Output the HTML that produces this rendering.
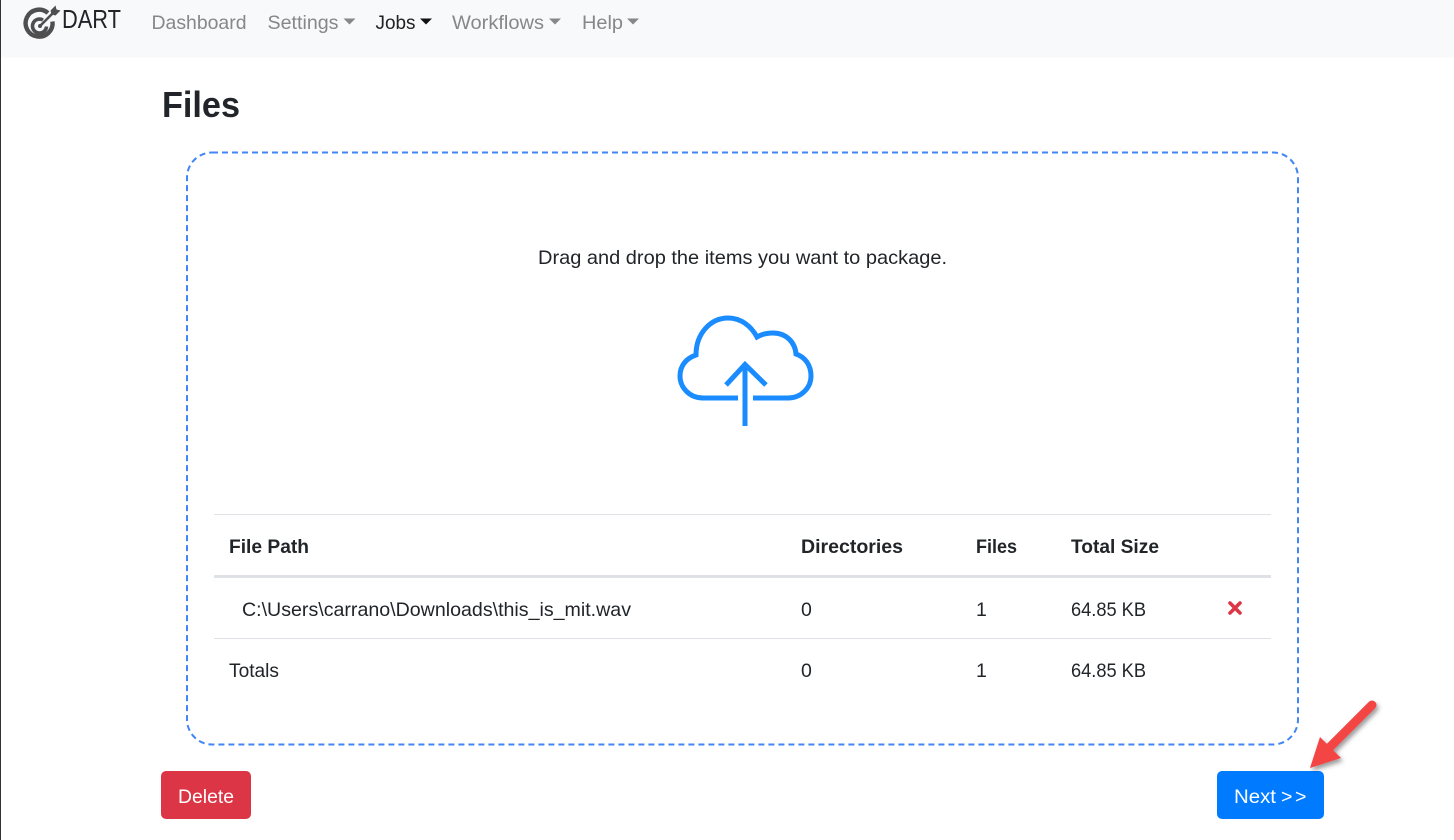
<!DOCTYPE html>
<html lang="en">
<head>
<meta charset="utf-8">
<title>DART - Files</title>
<style>
html,body{margin:0;padding:0;background:#fff;width:1454px;height:840px;overflow:hidden}
svg{display:block;position:absolute;left:0;top:0}
text{font-family:"Liberation Sans",sans-serif;font-size:19.5px;fill:#212529}
.n{fill:#85888b}
.b{font-weight:bold}
.w{fill:#fff}
</style>
</head>
<body>
<svg width="1454" height="840" viewBox="0 0 1454 840" xmlns="http://www.w3.org/2000/svg">
  <defs>
    <filter id="sh" x="-30%" y="-30%" width="160%" height="160%">
      <feDropShadow dx="2" dy="3" stdDeviation="2.5" flood-color="#000" flood-opacity=".4"/>
    </filter>
  </defs>

  <!-- nav -->
  <rect x="0" y="0" width="1454" height="57.500" fill="#f8f9fa"/>
  <rect x="0" y="0" width="1" height="840" fill="#333"/>

  <!-- logo -->
  <g transform="translate(1.500 0.500)">
    <g fill="none" stroke="#4f4f4f">
      <path d="M46.500 12.500 A13.500 13.500 0 1 0 51 21" stroke-width="4.400"/>
      <path d="M41.500 19.500 A7 7 0 1 0 45 26" stroke-width="3.600"/>
      <path d="M38.500 25.500 L52 12" stroke-width="2.600"/>
    </g>
    <path d="M49 10 L54 5 L55 9 L59 10 L54 15 L50 14 Z" fill="#4f4f4f"/>
    <circle cx="38.500" cy="25.500" r="2" fill="#4f4f4f"/>
  </g>

  <text x="62" y="28" style="font-size:26px" fill="#111" textLength="59" lengthAdjust="spacingAndGlyphs">DART</text>
  <text class="n" x="151.500" y="29" textLength="95" lengthAdjust="spacingAndGlyphs">Dashboard</text>
  <text class="n" x="267.500" y="29" textLength="71" lengthAdjust="spacingAndGlyphs">Settings</text>
  <path d="M343.500 18.500 h12 l-6 6 z" fill="#85888b"/>
  <text x="375.500" y="29" textLength="40" lengthAdjust="spacingAndGlyphs" style="fill:#222">Jobs</text>
  <path d="M420 18.500 h12 l-6 6 z" fill="#111"/>
  <text class="n" x="452" y="29" textLength="92" lengthAdjust="spacingAndGlyphs">Workflows</text>
  <path d="M549 18.500 h12 l-6 6 z" fill="#85888b"/>
  <text class="n" x="582" y="29" textLength="41" lengthAdjust="spacingAndGlyphs">Help</text>
  <path d="M627 18.500 h12 l-6 6 z" fill="#85888b"/>

  <!-- heading -->
  <text class="b" x="162" y="117" style="font-size:36px" textLength="78" lengthAdjust="spacingAndGlyphs">Files</text>

  <!-- drop zone -->
  <rect x="187" y="152.500" width="1111" height="592" rx="25" ry="25" fill="none" stroke="#4285f4" stroke-width="2" stroke-dasharray="6 4"/>
  <text x="538" y="264" textLength="409" lengthAdjust="spacingAndGlyphs">Drag and drop the items you want to package.</text>

  <!-- cloud -->
  <g fill="none" stroke="#1a8cff" stroke-width="5">
    <path d="M738 398 H703 C689 398 680 387 680 376 C680 365 687 358 696 355 C696 333 711 318 728 318 C741 318 751 326 757 337 C762 334 768 333 773 333 C786 333 795 342 796 354 C805 357 811 365 811 376 C811 388 801 398 788 398 H753"/>
    <path d="M745 426 V365"/>
    <path d="M726 385 L745 364.500 L766 385"/>
  </g>

  <!-- table -->
  <rect x="214" y="514" width="1057" height="1" fill="#dee2e6"/>
  <rect x="214" y="575" width="1057" height="3" fill="#dee2e6"/>
  <rect x="214" y="638" width="1057" height="1" fill="#dee2e6"/>

  <text class="b" x="229" y="553" textLength="80" lengthAdjust="spacingAndGlyphs">File Path</text>
  <text class="b" x="801" y="553" textLength="102" lengthAdjust="spacingAndGlyphs">Directories</text>
  <text class="b" x="976" y="553" textLength="41" lengthAdjust="spacingAndGlyphs">Files</text>
  <text class="b" x="1071" y="553" textLength="88" lengthAdjust="spacingAndGlyphs">Total Size</text>

  <text x="242" y="616" textLength="389" lengthAdjust="spacingAndGlyphs">C:\Users\carrano\Downloads\this_is_mit.wav</text>
  <text x="801" y="616">0</text>
  <text x="976" y="616">1</text>
  <text x="1071" y="616" textLength="75" lengthAdjust="spacingAndGlyphs">64.85 KB</text>
  <path d="M1230 603 L1240 613 M1240 603 L1230 613" stroke="#dc3545" stroke-width="3.600" stroke-linecap="round"/>

  <text x="229" y="677" textLength="50" lengthAdjust="spacingAndGlyphs">Totals</text>
  <text x="801" y="677">0</text>
  <text x="976" y="677">1</text>
  <text x="1071" y="677" textLength="75" lengthAdjust="spacingAndGlyphs">64.85 KB</text>

  <!-- buttons -->
  <rect x="161" y="771" width="90" height="48" rx="5" fill="#dc3545"/>
  <text class="w" x="178" y="803" textLength="56" lengthAdjust="spacingAndGlyphs">Delete</text>
  <rect x="1217" y="771" width="107" height="48" rx="5" fill="#007bff"/>
  <text class="w" x="1234" y="803" textLength="42" lengthAdjust="spacingAndGlyphs">Next</text>
  <text class="w" x="1281" y="803">&gt;</text>
  <text class="w" x="1295" y="803">&gt;</text>

  <!-- red arrow -->
  <g filter="url(#sh)">
    <path d="M1372 705 L1330 747" stroke="#f44545" stroke-width="9" stroke-linecap="round" fill="none"/>
    <path d="M1310 768 L1320 737 L1341 758 Z" fill="#f44545"/>
  </g>
</svg>
</body>
</html>
